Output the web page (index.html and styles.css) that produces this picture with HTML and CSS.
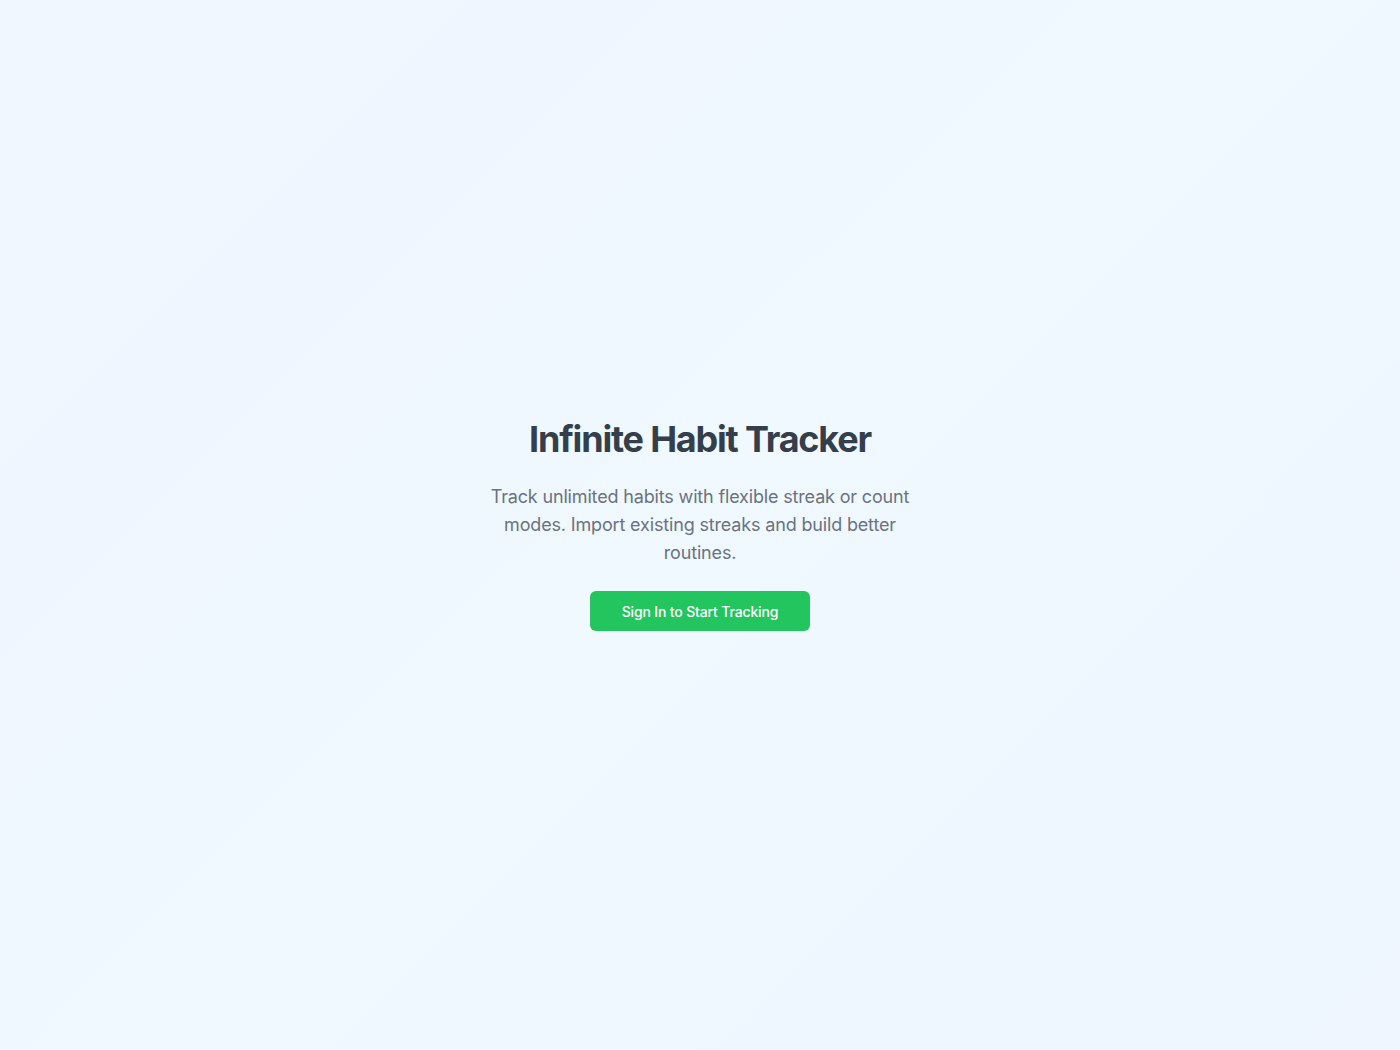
FILE: index.html
```html
<!DOCTYPE html>
<html lang="en">
<head>
<meta charset="utf-8">
<title>Infinite Habit Tracker</title>
<link rel="stylesheet" href="styles.css">
</head>
<body>
<main class="page">
  <section class="hero">
    <h1 class="title">Infinite Habit Tracker</h1>
    <p class="lead">Track unlimited habits with flexible streak or count modes. Import existing streaks and build better routines.</p>
    <button class="cta" type="button">Sign In to Start Tracking</button>
  </section>
</main>
</body>
</html>
```
FILE: styles.css
```css
* { box-sizing: border-box; }
html, body { margin: 0; padding: 0; }
body {
  font-family: "Inter", "Noto Sans", sans-serif;
  background: linear-gradient(135deg, #f0f7ff 0%, #eff6ff 25%, #f0f9ff 50%, #eef6ff 75%, #eff6ff 100%);
  min-height: 100vh;
}
.page {
  min-height: 100vh;
  display: flex;
  align-items: center;
  justify-content: center;
}
.hero {
  display: flex;
  flex-direction: column;
  align-items: center;
  text-align: center;
}
.title {
  margin: 0;
  font-size: 36px;
  line-height: 40px;
  font-weight: 700;
  color: #353f4c;
  letter-spacing: -1.2px;
}
.lead {
  margin: 24px 0 0;
  max-width: 448px;
  font-size: 18px;
  line-height: 28px;
  color: #6b7280;
  letter-spacing: -0.16px;
}
.cta {
  margin-top: 24px;
  width: 220px;
  height: 40px;
  border: none;
  border-radius: 6px;
  background: #22c55e;
  color: #ffffff;
  font-family: inherit;
  font-size: 14px;
  font-weight: 500;
  letter-spacing: -0.15px;
  cursor: pointer;
}
```
